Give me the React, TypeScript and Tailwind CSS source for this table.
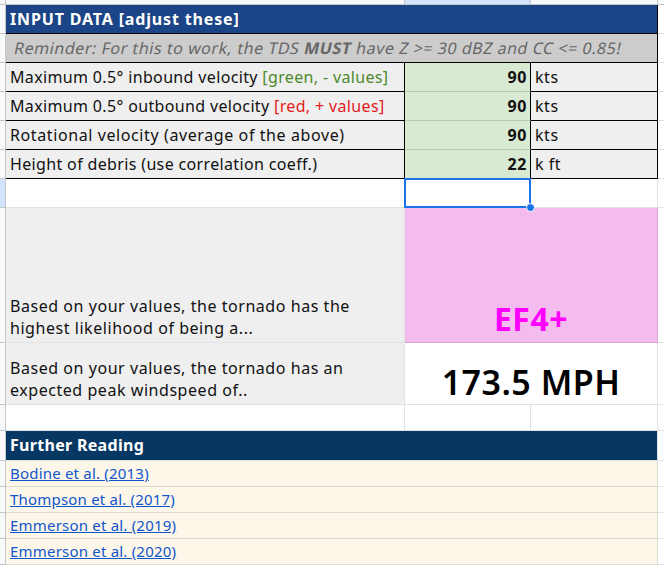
import React from "react";

const font = { fontFamily: "'Noto Sans', 'DejaVu Sans', sans-serif" };

function Gutter({ h, sel }: { h: string; sel?: boolean }) {
  return (
    <div
      className={`w-[6px] shrink-0 border-r border-b border-[#c4c7c5] ${h} ${
        sel ? "bg-[#d3e3fd]" : "bg-[#f8f9fa]"
      }`}
    />
  );
}

function Tail({ h }: { h: string }) {
  return <div className={`flex-1 border-b border-[#e2e2e2] bg-white ${h}`} />;
}

export default function App() {
  return (
    <div
      className="w-[664px] h-[566px] overflow-hidden bg-white text-[16px] tracking-[0.55px] text-[#111]"
      style={font}
    >
      {/* column header strip */}
      <div className="flex h-[5px]">
        <div className="w-[6px] border-r border-b border-[#c4c7c5] bg-[#f8f9fa]" />
        <div className="w-[399px] border-r border-b border-[#c4c7c5] bg-[#f8f9fa]" />
        <div className="w-[126px] border-r border-b border-[#c4c7c5] bg-[#d3e3fd]" />
        <div className="w-[127px] border-r border-b border-[#c4c7c5] bg-[#f8f9fa]" />
        <div className="flex-1 border-b border-[#c4c7c5] bg-[#f8f9fa]" />
      </div>

      {/* row 1 */}
      <div className="flex h-[29px]">
        <Gutter h="h-[29px]" />
        <div className="w-[652px] border-r border-b border-black bg-[#1c4587] flex items-end pl-[4px] pb-[2px] font-bold text-white text-[16px] tracking-[0.85px]">
          <span>INPUT DATA [adjust these]</span>
        </div>
        <Tail h="h-[29px]" />
      </div>

      {/* row 2 */}
      <div className="flex h-[29px]">
        <Gutter h="h-[29px]" />
        <div className="w-[652px] border-r border-b border-black bg-[#cccccc] flex items-end pl-[6px] pb-[2px] text-[#666666]">
          <span className="inline-block -skew-x-12 origin-bottom-left">
            Reminder: For this to work, the TDS <b>MUST</b> have Z &gt;= 30 dBZ and CC &lt;= 0.85!
          </span>
        </div>
        <Tail h="h-[29px]" />
      </div>

      {[
        {
          label: (
            <span>
              Maximum 0.5° inbound velocity{" "}
              <span className="text-[#4d8a2b]">[green, - values]</span>
            </span>
          ),
          v: "90",
          u: "kts",
        },
        {
          label: (
            <span>
              Maximum 0.5° outbound velocity{" "}
              <span className="text-[#e31b1b]">[red, + values]</span>
            </span>
          ),
          v: "90",
          u: "kts",
        },
        { label: <span className="tracking-[0.6px]">Rotational velocity (average of the above)</span>, v: "90", u: "kts" },
        { label: <span>Height of debris (use correlation coeff.)</span>, v: "22", u: "k ft" },
      ].map((r, i) => (
        <div key={i} className="flex h-[29px]">
          <Gutter h="h-[29px]" />
          <div className="w-[399px] border-r border-b border-black bg-[#efefef] flex items-end pl-[4px] pb-[2px] whitespace-nowrap tracking-[0.35px]">
            {r.label}
          </div>
          <div
            className={`w-[126px] border-r border-black border-b ${
              i === 3 ? "border-b-black" : "border-b-[#b7ccb0]"
            } bg-[#d9ead3] flex items-end justify-end pr-[3px] pb-[2px] font-bold`}
          >
            <span>{r.v}</span>
          </div>
          <div className="w-[127px] border-r border-b border-black bg-[#efefef] flex items-end pl-[4px] pb-[2px]">
            <span>{r.u}</span>
          </div>
          <Tail h="h-[29px]" />
        </div>
      ))}

      {/* row 7 with selected cell */}
      <div className="flex h-[29px]">
        <Gutter h="h-[29px]" sel />
        <div className="w-[399px] border-r border-b border-[#e2e2e2]" />
        <div className="relative w-[126px] border-r border-b border-[#e2e2e2]">
          <div className="absolute left-[-1px] top-[-1px] w-[127px] h-[30px] border-2 border-[#1a73e8]" />
          <div className="absolute right-[-5px] bottom-[-5px] w-[9px] h-[9px] rounded-full bg-[#1a73e8] border border-white z-10" />
        </div>
        <div className="w-[127px] border-r border-b border-[#e2e2e2]" />
        <Tail h="h-[29px]" />
      </div>

      {/* row 8 */}
      <div className="flex h-[135px]">
        <Gutter h="h-[135px]" />
        <div className="w-[399px] border-r border-b border-[#e2e2e2] bg-[#efefef] flex items-end pl-[4px] pb-[3px] leading-[22px]">
          <div>
            Based on your values, the tornado has the
            <br />
            highest likelihood of being a...
          </div>
        </div>
        <div className="w-[253px] border-r border-b border-[#d9a6d3] bg-[#f4bcee] flex items-end justify-center pb-[3px] text-[32px] font-bold text-[#ff00ff] leading-[40px] tracking-[0.5px]">
          <span>EF4+</span>
        </div>
        <Tail h="h-[135px]" />
      </div>

      {/* row 9 */}
      <div className="flex h-[62px]">
        <Gutter h="h-[62px]" />
        <div className="w-[399px] border-r border-b border-[#e2e2e2] bg-[#efefef] flex items-end pl-[4px] pb-[3px] leading-[22px]">
          <div>
            Based on your values, the tornado has an
            <br />
            expected peak windspeed of..
          </div>
        </div>
        <div className="w-[253px] border-r border-b border-[#e2e2e2] bg-white flex items-end justify-center pb-[0px] text-[34px] font-semibold text-black leading-[44px] tracking-[0.5px]">
          <span>173.5 MPH</span>
        </div>
        <Tail h="h-[62px]" />
      </div>

      {/* row 10 */}
      <div className="flex h-[26px]">
        <Gutter h="h-[26px]" />
        <div className="w-[399px] border-r border-b border-[#e2e2e2]" />
        <div className="w-[126px] border-r border-b border-[#e2e2e2]" />
        <div className="w-[127px] border-r border-b border-[#e2e2e2]" />
        <Tail h="h-[26px]" />
      </div>

      {/* row 11 */}
      <div className="flex h-[30px]">
        <Gutter h="h-[30px]" />
        <div className="w-[652px] border-r border-b border-[#e2e2e2] bg-[#073763] flex items-end pl-[4px] pb-[3px] font-bold text-white tracking-[0.3px]">
          <span>Further Reading</span>
        </div>
        <Tail h="h-[30px]" />
      </div>

      {[
        "Bodine et al. (2013)",
        "Thompson et al. (2017)",
        "Emmerson et al. (2019)",
        "Emmerson et al. (2020)",
      ].map((t) => (
        <div key={t} className="flex h-[26px]">
          <Gutter h="h-[26px]" />
          <div className="w-[652px] border-r border-b border-[#dedad0] bg-[#fdf7e9] flex items-end pl-[4px] pb-[2px] text-[15px] tracking-[0.2px]">
            <a className="text-[#1155cc] underline" href="#">
              {t}
            </a>
          </div>
          <Tail h="h-[26px]" />
        </div>
      ))}
    </div>
  );
}
